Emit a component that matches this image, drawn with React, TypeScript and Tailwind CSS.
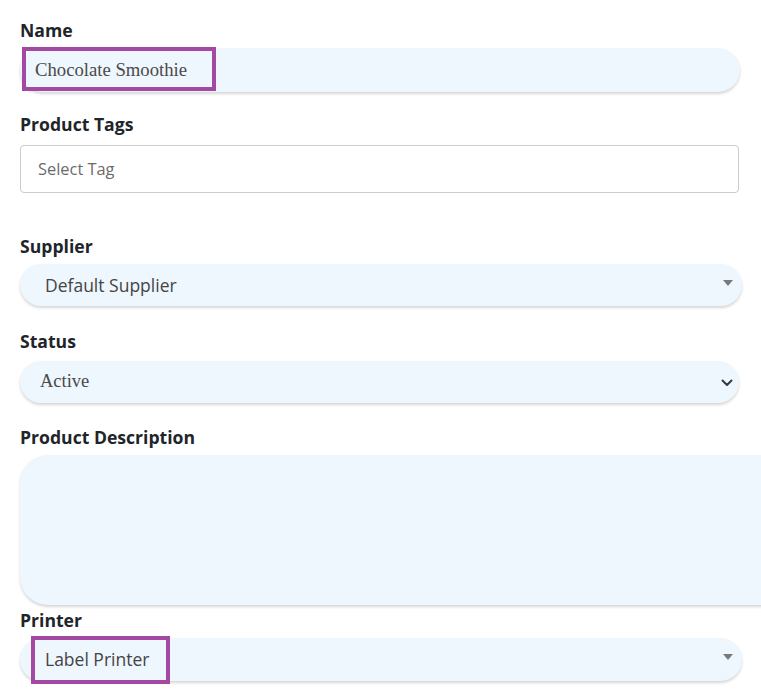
import React from "react";

const sans = { fontFamily: '"Open Sans", "Noto Sans", Arial, sans-serif' };
const serif = { fontFamily: '"Liberation Serif", "Times New Roman", serif' };

function Label({ children, className = "" }: { children: React.ReactNode; className?: string }) {
  return (
    <div className={`h-6 leading-6 text-[17.6px] font-bold text-[#212529] ${className}`}>{children}</div>
  );
}

function Triangle() {
  return (
    <svg className="absolute right-[9px] top-[16px]" width="10" height="6" viewBox="0 0 10 6">
      <path d="M0 0h10L5 6z" fill="#7a7a7a" />
    </svg>
  );
}

function Chevron() {
  return (
    <svg className="absolute right-[6px] top-[18px]" width="12" height="8" viewBox="0 0 12 8">
      <path d="M1.5 1.5 6 6l4.5-4.5" fill="none" stroke="#343a40" strokeWidth="2" strokeLinecap="round" strokeLinejoin="round" />
    </svg>
  );
}

export default function App() {
  return (
    <div className="w-[761px] h-[696px] overflow-hidden bg-white" style={sans}>
      <div className="pl-5 pt-[18px] flex flex-col">
        {/* Name */}
        <Label className="mb-[6px]">Name</Label>
        <div className="relative w-[720px] h-[44px] rounded-full bg-[#eef6fe] shadow-[0_2px_3px_rgba(0,0,0,0.16)] flex items-center pl-[15px]">
          <span className="text-[18.7px] text-[#4a4a4a]" style={serif}>
            Chocolate Smoothie
          </span>
          <div className="absolute left-[2px] top-[-1px] w-[194px] h-[44px] border-4 border-[#a349a4]" />
        </div>

        {/* Product Tags */}
        <Label className="mt-5 mb-[9px]">Product Tags</Label>
        <div className="w-[719px] h-[48px] rounded border border-[#cccccc] bg-white flex items-center pl-[17px]">
          <span className="text-[16.4px] text-[#6b6b6b]">Select Tag</span>
        </div>

        {/* Supplier */}
        <Label className="mt-[41px] mb-[6px]">Supplier</Label>
        <div className="relative w-[722px] h-[42px] rounded-full bg-[#eef6fe] shadow-[0_2px_3px_rgba(0,0,0,0.16)] flex items-center pl-[25px]">
          <span className="text-[17.5px] text-[#444]">Default Supplier</span>
          <Triangle />
        </div>

        {/* Status */}
        <Label className="mt-[23px] mb-[8px]">Status</Label>
        <div className="relative w-[719px] h-[42px] rounded-full bg-[#eef6fe] shadow-[0_2px_3px_rgba(0,0,0,0.16)] flex items-center pl-5">
          <span className="text-[18.5px] text-[#4a4a4a]" style={serif}>
            Active
          </span>
          <Chevron />
        </div>

        {/* Product Description */}
        <Label className="mt-[22px] mb-[6px]">Product Description</Label>
        <div className="w-[780px] h-[150px] rounded-[28px] bg-[#eef6fe] shadow-[0_2px_3px_rgba(0,0,0,0.16)]" />

        {/* Printer */}
        <Label className="mt-[3px] mb-[6px]">Printer</Label>
        <div className="relative w-[722px] h-[43px] rounded-full bg-[#eef6fe] shadow-[0_2px_3px_rgba(0,0,0,0.16)] flex items-center pl-[25px]">
          <span className="text-[17.5px] text-[#444]">Label Printer</span>
          <Triangle />
          <div className="absolute left-[11px] top-[-2px] w-[139px] h-[48px] border-4 border-[#a349a4]" />
        </div>
      </div>
    </div>
  );
}
